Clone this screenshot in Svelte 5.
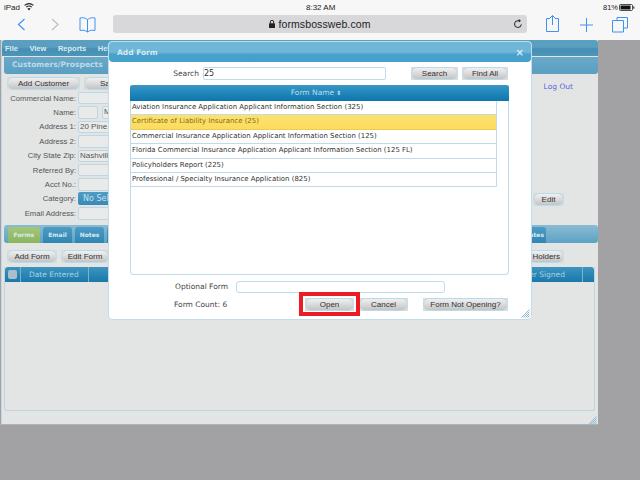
<script>
  const fields = [
    { label: 'Commercial Name:', width: 46 },
    { label: 'Name:', width: 20, second: 'M' },
    { label: 'Address 1:', width: 46, value: '20 Pine I' },
    { label: 'Address 2:', width: 46 },
    { label: 'City State Zip:', width: 46, value: 'Nashville' },
    { label: 'Referred By:', width: 46 },
    { label: 'Acct No.:', width: 46 },
    { label: 'Category:', select: 'No Sel' },
    { label: 'Email Address:', width: 46 }
  ];
  const rows = [
    'Aviation Insurance Application Applicant Information Section (325)',
    'Certificate of Liability Insurance (25)',
    'Commercial Insurance Application Applicant Information Section (125)',
    'Florida Commercial Insurance Application Applicant Information Section (125 FL)',
    'Policyholders Report (225)',
    'Professional / Specialty Insurance Application (825)'
  ];
</script>

<div class="screen">
  <div class="status">
    <span class="st-left">iPad
      <svg width="10" height="8" viewBox="0 0 10 8"><path d="M5 7.6 3.4 5.6a2.6 2.6 0 0 1 3.2 0zM2.5 4.6a4 4 0 0 1 5 0l.7-.9a5.2 5.2 0 0 0-6.4 0zM.9 2.8a6.6 6.6 0 0 1 8.2 0l.7-.9a7.8 7.8 0 0 0-9.6 0z" fill="#222"/></svg>
    </span>
    <span class="st-time">8:32 AM</span>
    <span class="st-right">81%
      <svg width="16" height="7" viewBox="0 0 16 7"><rect x=".5" y=".5" width="13" height="6" rx="1" fill="none" stroke="#222" stroke-width=".8"/><rect x="1.5" y="1.5" width="10" height="4" fill="#111"/><rect x="14.3" y="2.3" width="1" height="2.4" fill="#222"/></svg>
    </span>
  </div>
  <div class="toolbar">
    <svg class="tb" width="640" height="26" viewBox="0 0 640 26" aria-hidden="true">
      <g fill="none" stroke-width="1">
        <path d="M24.5 5 18.5 10.500 24.5 16" stroke="#3f93f0" stroke-width="1.2"/>
        <path d="M52 5 58 10.500 52 16" stroke="#bcbcbe" stroke-width="1.1"/>
        <path d="M87.500 5.500C85 3.500 82 3.500 80 4V16.500C82.500 16 85 16 87.500 18 90 16 92.500 16 95 16.500V4C93 3.500 90 3.500 87.500 5.500ZM87.500 5.500V18" stroke="#3f93f0"/>
        <path d="M550 4.500H546.500V17.500H558.500V4.500H555M552.500 11V1.500M550 4 552.500 1.500 555 4" stroke="#3f93f0"/>
        <path d="M586.500 4V18M580 11H593" stroke="#3f93f0"/>
        <path d="M612.500 6.500H623.500V18H612.500ZM617 6.500V3.500H627.500V14H623.500" stroke="#3f93f0"/>
      </g>
    </svg>
    <div class="url">
      <svg width="6" height="8" viewBox="0 0 6 8"><rect y="3.200" width="6" height="4.800" rx=".6" fill="#222"/><path d="M1.300 3.500V2a1.700 1.700 0 0 1 3.400 0v1.500" fill="none" stroke="#222"/></svg>
      <span>formsbossweb.com</span>
      <svg class="reload" width="10" height="10" viewBox="0 0 10 10"><path d="M8.300 5.400A3.400 3.400 0 1 1 5 1.700H6.600" fill="none" stroke="#222" stroke-width="1"/><path d="M5.800 0 8 1.700 5.800 3.400Z" fill="#222"/></svg>
    </div>
  </div>

  <div class="stage">
    <div class="app">
      <nav class="menu"><span>File</span><span>View</span><span>Reports</span><span>Help</span></nav>
      <div class="title">Customers/Prospects</div>
      <div class="content">
        <div class="top">
          <div class="actions"><button class="btn w-customer">Add Customer</button><button class="btn w-save">Save</button></div>
          <a class="logout" href="#top">Log Out</a>
        </div>
        <div class="fields">
          {#each fields as f}
            <div class="field">
              <label class="lab" for={f.label}>{f.label}</label>
              {#if f.select}
                <span class="select">{f.select}</span>
                <button class="btn edit">Edit</button>
              {:else}
                <span class="inp" id={f.label} style="width:{f.width}px">{f.value ?? ''}</span>
                {#if f.second}<span class="inp second">{f.second}</span>{/if}
              {/if}
            </div>
          {/each}
        </div>
        <div class="tabs">
          <span class="tab green">Forms</span>
          <span class="tab">Email</span>
          <span class="tab">Notes</span>
          <span class="tab long">Policy</span>
          <span class="tab last">Certificates</span>
        </div>
        <div class="form-actions">
          <button class="btn w-add">Add Form</button>
          <button class="btn w-edit">Edit Form</button>
          <button class="btn holders">Certificate Holders</button>
        </div>
        <div class="grid">
          <div class="grid-head">
            <span class="c-check"><i></i></span>
            <span class="c-date">Date Entered</span>
            <span class="c-signed">Customer Signed</span>
            <span class="c-end"></span>
          </div>
        </div>
        <svg class="grip app-grip" width="9" height="9" viewBox="0 0 9 9"><path d="M8.500.5 .5 8.500M8.500 2.500 2.500 8.500M8.500 4.500 4.500 8.500M8.500 6.500 6.500 8.500" stroke="#8fb6d0" fill="none"/></svg>
      </div>
    </div>

    <section class="dialog">
      <header class="d-title"><span>Add Form</span><b>×</b></header>
      <div class="d-search">
        <span class="d-lab">Search</span>
        <span class="d-input">25</span>
        <button class="btn s1">Search</button>
        <button class="btn s2">Find All</button>
      </div>
      <div class="d-table">
        <div class="d-head"><span>Form Name</span><em>⬍</em></div>
        <div class="d-rows">
          {#each rows as r, i}
            <div class="d-row" class:sel={i === 1}>{r}</div>
          {/each}
        </div>
      </div>
      <div class="d-opt">
        <span class="d-lab2">Optional Form</span>
        <span class="d-input2"></span>
      </div>
      <div class="d-foot">
        <span class="count">Form Count: 6</span>
        <button class="btn open">Open</button>
        <button class="btn cancel">Cancel</button>
        <button class="btn notopen">Form Not Opening?</button>
      </div>
      <svg class="grip d-grip" width="9" height="9" viewBox="0 0 9 9"><path d="M8.500.5 .5 8.500M8.500 2.500 2.500 8.500M8.500 4.500 4.500 8.500M8.500 6.500 6.500 8.500" stroke="#8fb6d0" fill="none"/></svg>
      <div class="redbox"></div>
    </section>
  </div>
</div>

<style>
  :global(body) { margin: 0; background: #a2a2a4; }
  * { box-sizing: border-box; }
  .screen { width: 640px; height: 480px; overflow: hidden; font-family: "Liberation Sans", Arial, sans-serif; position: relative; }

  .status { height: 14px; background: #f7f7f7; display: flex; align-items: center; justify-content: space-between; padding: 0 4px; font-size: 7.500px; color: #222; position: relative; }
  .st-left, .st-right { display: flex; align-items: center; gap: 4px; }
  .st-left { font-size: 8px; }
  .st-time { position: absolute; left: 306px; font-size: 8px; }
  .st-right { gap: 1px; margin-right: 1px; }
  .status svg { display: block; }

  .toolbar { height: 26px; background: #f7f7f7; position: relative; padding: 1px 0 0 113px; }
  .tb { position: absolute; left: 0; top: 0; }
  .url { width: 414px; height: 18px; background: #d8d8da; border-radius: 3px; display: flex; align-items: center; justify-content: center; gap: 3px; font-size: 10.500px; color: #222; position: relative; letter-spacing: .1px; }
  .reload { position: absolute; right: 4px; top: 4px; }

  .stage { position: relative; height: 440px; background: #a2a2a4; }
  .app { margin-left: 1px; width: 597px; height: 385px; background: #e3e4e4; border-bottom: 1px solid #a9b4bc; border-left: 1px solid #c3d6e2; }

  .menu { height: 16px; background: linear-gradient(#5b9fc0 0, #5b9fc0 45%, #468fb4 55%, #4d95b9 100%); border-radius: 3px 3px 0 0; display: flex; gap: 11.500px; padding: 0 3px; align-items: center; font-size: 7.500px; font-weight: bold; color: #dcecf3; }
  .title { height: 17px; margin: 1px 0 0 2px; background: linear-gradient(#6aa8c8, #5a9fc2); border-radius: 0 0 3px 3px; font: bold 7.600px "DejaVu Sans", sans-serif; color: #bcdbe8; padding: 3px 0 0 8px; }

  .content { position: relative; }
  .top { display: flex; justify-content: space-between; padding: 3px 25px 0 5px; height: 16px; }
  .actions { display: flex; gap: 4px; }
  .logout { font: 7.500px "DejaVu Sans", sans-serif; color: #5a66dd; text-decoration: none; margin-top: 5px; }

  .btn { height: 13px; padding: 0; border: 0; border-radius: 0; background: #dcdcdc; font: 8px "Liberation Sans", Arial, sans-serif; color: #333; display: block; position: relative; z-index: 0; }
  .btn::before { content: ""; position: absolute; inset: 0; z-index: -1; border: 1px solid #b5dcee; border-radius: 6.500px; background: linear-gradient(#f0f0f0, #c4c4c4); }
  .w-customer { width: 73px; }
  .w-save { width: 50px; }

  .fields { display: flex; flex-direction: column; padding-top: 1px; }
  .field { height: 14.400px; display: flex; align-items: center; position: relative; }
  .lab { width: 74px; text-align: right; font-size: 7.700px; color: #555; margin-right: 2px; }
  .inp { height: 12.500px; background: #e9eaea; border: 1px solid #bed5e3; border-radius: 2px; font-size: 8px; color: #555; line-height: 10px; padding-left: 1px; overflow: hidden; }
  .second { width: 30px; margin-left: 4px; }
  .select { width: 46px; height: 13px; background: linear-gradient(#4e9cc4, #3a8ab5); border-radius: 2px; color: #c7e0ec; font: 8px "DejaVu Sans", sans-serif; padding: 2px 0 0 5px; }
  .edit { position: absolute; left: 531px; top: 1px; width: 31px; }

  .tabs { height: 18px; margin: 4px 0 0 2px; background: linear-gradient(#8bbbd3, #6eaccb 60%, #5ea2c4); border-radius: 3px; display: flex; gap: 3px; padding: 2px 0 0 4px; position: relative; }
  .tab { width: 29px; height: 16px; background: linear-gradient(#4e9bc3, #2f86b3); border-radius: 3px 3px 0 0; font: bold 6px "DejaVu Sans", sans-serif; color: #d8ebf3; text-align: center; line-height: 15px; }
  .green { width: 32px; background: linear-gradient(#a3c778, #8ab55f); }
  .long { width: 60px; }
  .last { width: 60px; position: absolute; left: 482px; top: 2px; overflow: hidden; text-align: right; padding-right: 2px; }

  .form-actions { display: flex; gap: 4px; padding: 7px 0 0 5px; height: 24px; position: relative; }
  .w-add { width: 50px; }
  .w-edit { width: 48px; }
  .holders { position: absolute; left: 480px; top: 7px; width: 82px; text-align: right; padding-right: 4px; }

  .grid { margin: 0 3px 0 2px; height: 144px; border: 1px solid #bed5e3; border-top: 0; border-radius: 0 0 3px 3px; }
  .grid-head { height: 15px; background: linear-gradient(#3f94bf, #2a86b4 50%, #1c78a8); display: flex; align-items: center; font: 7.500px "DejaVu Sans", sans-serif; color: #a9d2e5; border-radius: 3px 3px 0 0; }
  .grid-head span { height: 100%; display: flex; align-items: center; border-right: 1px solid #7ab3cf; }
  .c-check { width: 16px; justify-content: center; }
  .c-check i { width: 9px; height: 9px; background: #a9bfcc; border-radius: 2px; display: block; }
  .c-date { width: 68px; padding-left: 8px; }
  .c-signed { flex: 1; justify-content: flex-end; padding-right: 17px; }
  .c-end { width: 11px; border-right: 0 !important; }

  .grip { position: absolute; display: block; }
  .app-grip { left: 586px; top: 342px; }

  .dialog { position: absolute; left: 108px; top: 1px; width: 424px; height: 279px; background: #fff; border: 1px solid #c3dcea; border-radius: 4px; }
  .d-title { height: 20px; margin: 0; background: linear-gradient(#6db6d7 0, #70b7d7 50%, #47a1cd 62%, #45a0cc 100%); border-radius: 3px 3px 4px 4px; display: flex; justify-content: space-between; align-items: center; padding: 0 7px 0 8px; font: bold 7.500px "DejaVu Sans", sans-serif; color: #d3e9f3; }
  .d-title b { font-size: 10px; color: #dcecf4; }

  .d-search { display: flex; height: 13px; margin-top: 5px; align-items: center; position: relative; }
  .d-lab { width: 90px; text-align: right; font: 7.500px "DejaVu Sans", sans-serif; color: #444; margin-right: 4px; }
  .d-input { width: 183px; height: 13px; border: 1px solid #bfdcec; border-radius: 2px; font: 8px "DejaVu Sans", sans-serif; color: #333; line-height: 11px; }
  .s1 { width: 47px; margin-left: 25px; font-size: 8px; }
  .s2 { width: 46px; margin-left: 4px; }

  .d-table { margin: 5px 0 0 21px; width: 379px; height: 190px; border: 1px solid #bfdcec; border-top: 0; border-radius: 0 0 4px 4px; }
  .d-head { height: 16px; margin: 0 -1px; background: linear-gradient(#3a96c5, #2288bb 45%, #0e76ae); border-radius: 3px 3px 0 0; text-align: center; font: 7.500px "DejaVu Sans", sans-serif; color: #b6dcec; line-height: 16px; padding-right: 7px; }
  .d-head em { font-style: normal; font-size: 6px; margin-left: 2px; }
  .d-rows { width: 366px; min-height: 86px; }
  .d-row { height: 14.400px; border-bottom: 1px solid #c4d9e7; border-right: 1px solid #bfdcec; font: 6.950px/13px "DejaVu Sans", sans-serif; color: #333; padding-left: 1px; white-space: nowrap; overflow: hidden; }
  .sel { background: linear-gradient(#fbe26f, #fbdc5e); color: #8b6b12; border-bottom-color: #f2c94c; }

  .d-opt { display: flex; align-items: center; height: 13px; margin-top: 5px; }
  .d-lab2 { width: 119px; text-align: right; font: 7.500px "DejaVu Sans", sans-serif; color: #444; margin-right: 8px; }
  .d-input2 { width: 209px; height: 12px; border: 1px solid #bfdcec; border-radius: 3px; }

  .d-foot { display: flex; align-items: center; height: 13px; margin-top: 5px; }
  .count { width: 196px; padding-left: 65px; font: 7.500px "DejaVu Sans", sans-serif; color: #444; }
  .open { width: 49px; }
  .cancel { width: 49px; margin-left: 5px; }
  .notopen { width: 85px; margin-left: 15px; }
  .d-grip { right: 1px; bottom: 1px; }
  .redbox { position: absolute; left: 190px; top: 250px; width: 61px; height: 24px; border: 4px solid #ec1c24; }
</style>
